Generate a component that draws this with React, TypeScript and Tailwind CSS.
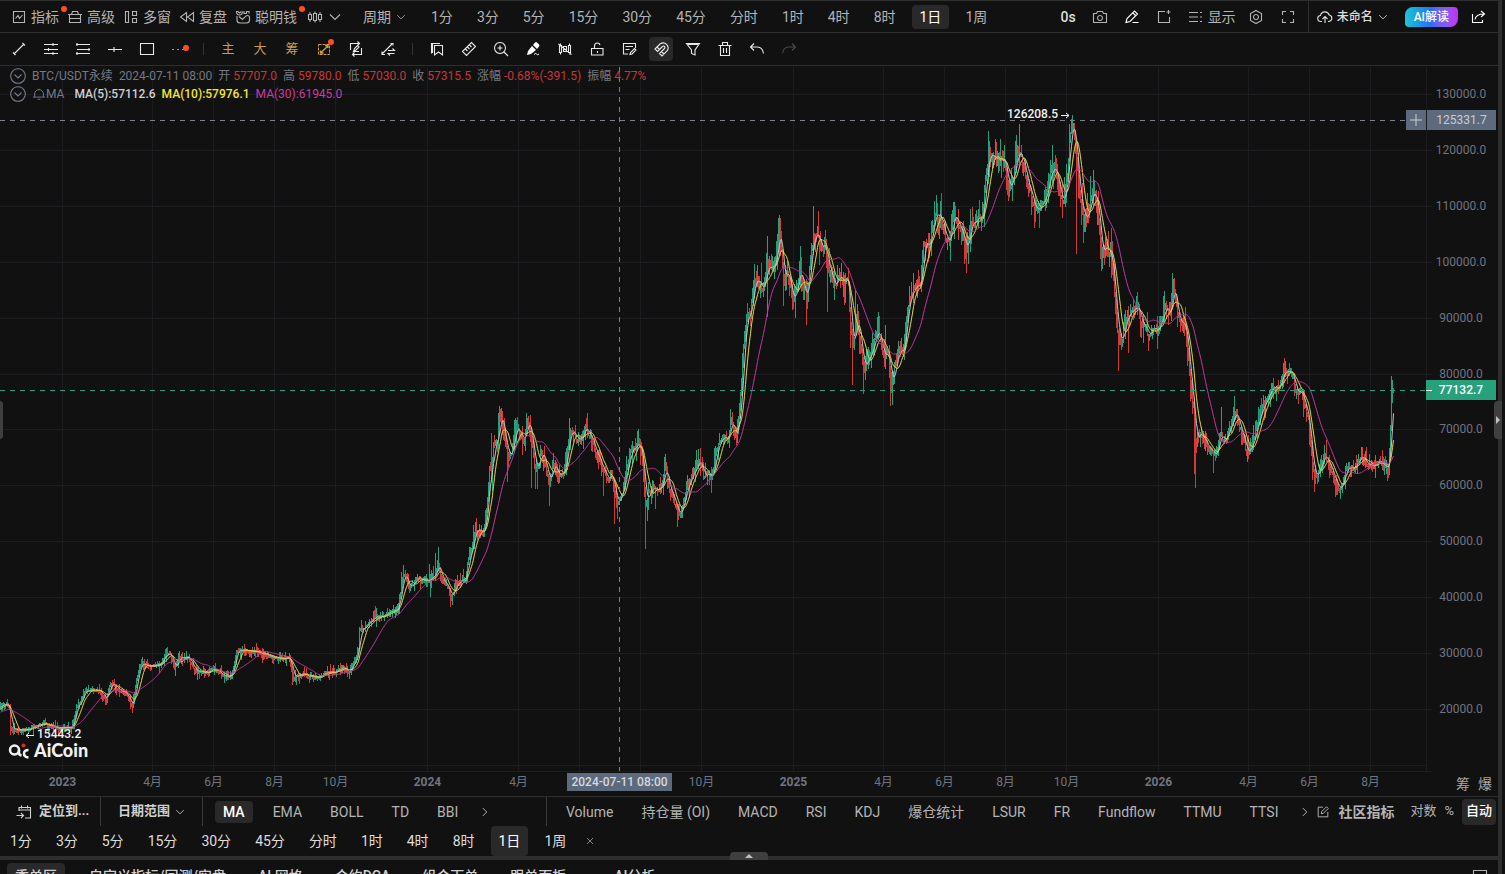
import React, { useState } from "react";
import clsx from "clsx";

// close anchors as [day, y] in plot units, one unit per day on the x axis
const ANCHORS = [
    [-32, 716], [-20, 714], [-10, 712], [0, 706], [6, 703], [9, 708], [10, 726], [14, 730], [22, 730], [30, 729], [34, 726], [45, 723], [48, 726], [60, 728],
    [71, 727], [74, 718], [76, 705], [80, 703], [83, 692], [90, 690], [96, 690], [100, 692], [106, 700], [109, 685], [113, 684], [118, 690],
    [124, 692], [128, 698], [132, 707], [135, 685], [139, 666], [142, 664], [150, 667], [160, 664], [164, 655], [170, 654], [174, 668],
    [179, 657], [188, 658], [194, 670], [200, 672], [208, 673], [212, 668], [218, 672], [224, 676], [229, 677], [233, 668], [236, 651],
    [245, 650], [255, 652], [260, 653], [270, 657], [282, 659], [289, 657], [291, 670], [293, 677], [303, 673], [307, 676], [317, 678],
    [325, 672], [335, 672], [342, 667], [348, 672], [355, 660], [358, 648], [359, 630], [364, 628], [370, 622], [375, 616], [380, 618],
    [387, 613], [397, 610], [400, 592], [402, 577], [405, 576], [409, 588], [413, 584], [417, 577], [421, 579], [428, 582], [431, 576],
    [435, 574], [438, 562], [441, 578], [447, 587], [451, 598], [455, 586], [459, 581], [465, 579], [468, 557], [472, 545], [474, 531],
    [480, 531], [484, 530], [487, 500], [489, 468], [491, 478], [493, 445], [497, 440], [499, 420], [501, 416], [504, 440], [507, 455],
    [511, 452], [515, 428], [520, 432], [523, 443], [527, 422], [530, 430], [534, 464], [538, 466], [541, 450], [545, 465], [549, 482],
    [553, 462], [558, 475], [563, 475], [567, 448], [570, 430], [575, 437], [580, 440], [585, 427], [590, 436], [597, 455], [603, 470],
    [608, 480], [611, 472], [616, 502], [621, 495], [626, 470], [630, 450], [635, 448], [638, 442], [642, 460], [645, 505], [648, 492],
    [652, 487], [657, 491], [661, 485], [665, 465], [669, 490], [675, 505], [679, 516], [684, 497], [690, 477], [695, 467], [699, 458],
    [703, 477], [708, 475], [712, 477], [716, 450], [722, 437], [727, 440], [731, 420], [733, 428], [736, 438], [739, 405], [741, 390],
    [743, 345], [746, 318], [750, 315], [753, 283], [757, 280], [762, 290], [767, 268], [772, 266], [776, 255], [779, 230], [783, 280],
    [787, 275], [793, 300], [798, 282], [800, 265], [803, 293], [807, 295], [811, 245], [814, 235], [817, 234], [820, 250], [824, 242],
    [827, 262], [833, 285], [840, 278], [848, 282], [850, 325], [853, 345], [857, 315], [860, 345], [864, 370], [870, 352], [878, 332],
    [883, 355], [888, 357], [891, 385], [894, 370], [898, 350], [903, 348], [907, 305], [915, 286], [920, 284], [923, 245], [930, 241],
    [935, 212], [940, 215], [945, 238], [950, 242], [953, 213], [960, 228], [966, 249], [970, 226], [975, 222], [983, 213], [985, 175],
    [989, 152], [995, 159], [1004, 160], [1008, 188], [1013, 175], [1018, 150], [1023, 165], [1028, 185], [1035, 210], [1043, 205],
    [1050, 172], [1055, 172], [1058, 185], [1063, 205], [1067, 170], [1070, 132], [1073, 128], [1076, 155], [1078, 182], [1083, 218],
    [1088, 212], [1093, 190], [1097, 205], [1101, 252], [1106, 248], [1110, 252], [1114, 290], [1117, 332], [1121, 342], [1126, 315],
    [1130, 312], [1137, 308], [1143, 327], [1149, 333], [1158, 330], [1164, 308], [1170, 312], [1173, 285], [1178, 320], [1185, 328],
    [1189, 372], [1193, 410], [1195, 443], [1198, 432], [1204, 440], [1210, 450], [1215, 455], [1220, 435], [1225, 440], [1230, 425],
    [1234, 412], [1240, 430], [1246, 452], [1252, 445], [1258, 420], [1265, 400], [1272, 388], [1278, 390], [1283, 372], [1290, 370],
    [1295, 388], [1302, 395], [1308, 420], [1312, 465], [1316, 478], [1324, 455], [1330, 468], [1335, 483], [1340, 490], [1345, 470],
    [1355, 466], [1361, 456], [1367, 464], [1373, 467], [1378, 460], [1388, 468], [1389, 452], [1390, 430], [1391, 405], [1392, 390], [1393, 391],
];

// days with a long wick: [day, high y, low y], 0 keeps the usual range
const WICKS = [
    [10, 0, 734], [12, 0, 732], [23, 0, 734], [45, 718, 0], [132, 0, 712], [167, 647, 0], [292, 0, 684], [256, 643, 0], [361, 620, 0],
    [375, 606, 0], [401, 572, 0], [429, 564, 0], [430, 0, 596], [435, 553, 0], [438, 547, 0], [450, 0, 606], [473, 525, 0], [491, 433, 480], [492, 0, 490],
    [498, 413, 0], [500, 409, 0], [501, 408, 0], [507, 0, 481], [514, 420, 0], [526, 413, 0], [529, 422, 0], [531, 0, 487], [535, 0, 488], [537, 0, 488],
    [549, 0, 505], [569, 418, 0], [575, 425, 0], [586, 418, 0], [603, 0, 495], [614, 0, 523], [617, 0, 518], [638, 429, 0],
    [645, 0, 548], [647, 0, 520], [655, 0, 508], [664, 457, 0], [677, 0, 526], [698, 449, 0], [711, 0, 492], [730, 409, 0],
    [754, 264, 0], [767, 236, 316], [778, 218, 0], [779, 215, 0], [783, 0, 305], [792, 0, 309], [800, 246, 0], [806, 0, 324],
    [813, 206, 0], [827, 0, 311], [852, 0, 384], [855, 290, 0], [863, 0, 393], [885, 325, 0], [890, 0, 405], [892, 0, 404],
    [936, 195, 0], [954, 202, 0], [950, 0, 260], [966, 0, 272], [988, 131, 0], [1016, 135, 0], [1019, 124, 0], [1035, 0, 221],
    [1071, 119, 0], [1072, 115, 0], [1076, 0, 253], [1083, 0, 242], [1093, 170, 0], [1102, 0, 268], [1118, 0, 370], [1128, 0, 352],
    [1137, 292, 0], [1164, 291, 0], [1172, 273, 0], [1194, 0, 473], [1195, 0, 487], [1213, 0, 472], [1221, 407, 0], [1234, 396, 0],
    [1284, 358, 0], [1314, 0, 491], [1324, 445, 0], [1335, 0, 496], [1340, 0, 498], [1361, 447, 0], [1391, 376, 0], [1392, 380, 402], [1393, 388, 392],
];

const MONTHS: Array<[number, string]> = [
    [62, "2023"], [152, "4月"], [213, "6月"], [274, "8月"], [335, "10月"], [427, "2024"], [518, "4月"], [579, ""], [640, ""], [701, "10月"],
    [793, "2025"], [883, "4月"], [944, "6月"], [1005, "8月"], [1066, "10月"], [1158, "2026"], [1248, "4月"], [1309, "6月"], [1370, "8月"],
];

const PRICES = ["130000.0", "120000.0", "110000.0", "100000.0", "90000.0", "80000.0", "70000.0", "60000.0", "50000.0", "40000.0", "30000.0", "20000.0"];
const PERIODS = ["1分", "3分", "5分", "15分", "30分", "45分", "分时", "1时", "4时", "8时", "1日", "1周"];
const MAIN_INDICATORS = ["MA", "EMA", "BOLL", "TD", "BBI"];
const SUB_INDICATORS = ["Volume", "持仓量 (OI)", "MACD", "RSI", "KDJ", "爆仓统计", "LSUR", "FR", "Fundflow", "TTMU", "TTSI"];
const PANELS = ["委单区", "自定义指标/回测/实盘", "AI 网格", "合约DCA", "组合下单", "跟单面板", "AI分析"];

const buildSeries = () => {
    let seed = 20240711;
    const rand = () => {
        seed = (seed * 1103515245 + 12345) % 2147483648;
        return seed / 2147483648;
    };
    const closes: number[] = [];
    const first = ANCHORS[0][0];
    let k = 0;
    for (let x = first; x <= 1393; x++) {
        while (k < ANCHORS.length - 2 && x >= ANCHORS[k + 1][0]) k++;
        const [x0, y0] = ANCHORS[k];
        const [x1, y1] = ANCHORS[k + 1];
        const base = y0 + ((y1 - y0) * (x - x0)) / (x1 - x0);
        const amp = 2 + Math.max(0, 690 - base) / 60;
        closes.push(base + (rand() - 0.5) * amp);
    }
    let up = "";
    let down = "";
    for (let x = 0; x <= 1393; x++) {
        const i = x - first;
        const open = closes[i - 1];
        const close = closes[i];
        const amp = 5 + Math.max(0, 690 - close) / 40;
        let high = Math.min(open, close) - rand() * rand() * amp * 1.5;
        let low = Math.max(open, close) + rand() * rand() * amp * 1.5;
        const wick = WICKS.find((w) => w[0] == x);
        if (wick) {
            high = wick[1] || high;
            low = wick[2] || low;
        }
        // the extremes of the range stay at the labelled high and low
        const seg = `M${x + 0.5} ${Math.max(115, Math.round(high))}V${Math.min(735, Math.round(low) + 1)}`;
        if (close <= open) up += seg;
        else down += seg;
    }
    const average = (n: number) => {
        const points = [];
        for (let x = 0; x <= 1393; x++) {
            let sum = 0;
            const i = x - first;
            for (let j = 0; j < n; j++) sum += closes[i - j];
            points.push(`${x + 0.5},${(sum / n).toFixed(1)}`);
        }
        return points.join(" ");
    };
    return { up, down, ma5: average(5), ma10: average(10), ma30: average(30) };
};

const series = buildSeries();

const ICONS = {
    indicator: "M2.5 2.5h11v11h-11z M4.5 9.5l2.5-3 1.5 3 3-3.5",
    briefcase: "M4.5 5.5l1-3h5l1 3 M1 5.5h14 M2.5 5.5v8h11v-8 M2.5 9.5h11",
    windows: "M2.5 2.5h3v11h-3z M9.5 2.5h4v4h-4z M9.5 9.5h4v4h-4z",
    rewind: "M7.5 3.5v9l-6-4.5z M14.5 3.5v9L8.5 8z",
    whale: "M1 2.500h2l1.500 1.500L6.500 2.500M1.500 2.500q0 3.500 3 3.500 3 0 3-3.500 M2 7v4q0 3 3 3h6.500q3 0 3-3V8.500q0-2-2-2-1.500 0-3 2L7.500 10.500 4 7.500 M9 2v2.500h2.500V2.500h2.500v2",
    candles: "M1.500 5.500h3v5h-3z M3 3v2.500 M3 10.500v2.500 M6.500 4.500h3v7h-3z M8 2.500v2 M8 11.500v2 M11.500 5.500h3v5h-3z M13 3v2.500 M13 10.500v2.500",
    chevron: "M3 5.500l5 5 5-5",
    right: "M5.500 3.500L10 8l-4.500 4.500",
    trend: "M3.500 12.500l9-9 M2 11.500l2.500 2.500 M11.500 2l2.500 2.500",
    hlines: "M1 3.500h14 M1 8.500h14 M1 12.500h14 M10 2v3 M5.500 7v3 M10 11v3",
    channel: "M1 3.500h14 M2 8.500h13 M1 12.500h14 M2 2v3 M14 7v3 M2 11v3",
    cross: "M1 8.500h14 M7 6v5",
    rect: "M1.500 2.500h13v11h-13z",
    dots: "M1 8.500h2 M6 8.500h2 M11 8.500h2",
    swap: "M2.500 9v-6.500h9 M9.500 .5l2 2-2 2 M13.500 7v6.500h-9 M6.500 11.500l-2 2 2 2 M5.500 10.500l1-3 3-3 1.500 1.500-3 3z M5.500 10.500h5.500",
    slope: "M2 13L12 3 M2 10.500v3h3 M10.500 2.500h2.500v2 M8 9.500h6.500l-2-2 M14.500 12.500H8l2 2",
    bookmark: "M2.500 12.500v-10h8.500 M3.500 12v-9 M5.500 4.500h8v9.500l-4-3-4 3z",
    ruler: "M1.500 10.500L10.500 1.500l4 4L5.500 14.500z M4.500 8l2 2 M6.500 6l2 2 M8.500 4l2 2",
    zoom: "M7 1.500a5.500 5.500 0 1 0 0.010 0z M11 11l4 4 M4.500 7h5 M7 4.500v5",
    hideCandles: "M2.500 4.500h2v7h-2z M6.500 5.500h3v5h-3z M11.500 4.500h2v7h-2z M3.500 2.500v2 M3.500 11.500v2 M12.500 2.500v2 M12.500 11.500v2 M1.500 3l13 10.500",
    unlock: "M2.500 7.500h11.500v6.500H2.500z M5.500 7.500V5q0-3 3-3 2 0 2.500 2 M8.500 10v2",
    note: "M14.500 7V2.500H2.500v10.500h4.500 M4.500 5.500h7.500 M4.500 8.500h4 M9 13.500l.5-2 4-4 1.500 1.500-4 4z",
    magnet: "M2 8L7 3a5 5 0 0 1 7 7l-5 5-2.500-2.500 5-5a1.400 1.400 0 0 0-2-2l-5 5z M4 6l2.500 2.500 M11 13 L8.500 10.500",
    filter: "M1.500 2.500h13L10 9v5l-3.500-1.500V9z M3 3.500h10",
    trash: "M1.500 4.500h13 M5.500 4V1.500h5V4 M3.500 4.500v10h9v-10 M6.500 7v5 M9.500 7v5",
    undo: "M5 2.500L1.500 6 5 9.500 M1.500 6h7q5 0 6 6.500",
    redo: "M11 2.500L14.500 6 11 9.500 M14.500 6h-7q-5 0-6 6.500",
    camera: "M1.500 4.500h3l1-2h5l1 2h3v9h-13z M8 6.500a2.500 2.500 0 1 0 .010 0z",
    pen: "M2 13.500l1-4L10.500 2l3 3L6 12.500z M8.500 13.500h6 M9 4l3 3",
    addWindow: "M9 2.500H2.500v11h11V8 M12.500 1v4 M10.500 3h4",
    list: "M1 3.500h9 M1 8h9 M1 12.500h9 M12 3.500h2 M12 8h2 M12 12.500h2",
    hex: "M8 1.500l5.500 3v7L8 14.500l-5.500-3v-7z M8 5.500a2.500 2.500 0 1 0 .010 0z",
    expand: "M2.500 6V2.500H6 M10 2.500h3.500V6 M13.500 10v3.500H10 M6 13.500H2.500V10",
    cloud: "M5 12.500H4a3 3 0 0 1-.5-6 4.500 4.500 0 0 1 8.700-.5A3.300 3.300 0 0 1 12 12.500h-1 M8 14V8 M5.500 10L8 7.500l2.500 2.500",
    share: "M2.500 5v8.500h10V11 M5 10.500q1-5.500 9-5.500 M11 2l3.500 3L11 8",
    locate: "M3 7V3.500h11.500v10.500H9 M3 6h11.500 M5.500 1.500v3 M11.500 1.500v3 M0.500 11.500h7 M5 9l2.500 2.500L5 14",
    edit: "M8 2.500H2.500v11h11V8 M6 10l.5-2.500L12 2l2 2-5.500 5.500z",
    bell: "M3 11.500V8a5 5 0 0 1 10 0v3.500 M1 11.500h14 M6.500 14h3 M8 2v1",
    collapse: "M8 .75a7.250 7.250 0 1 0 .010 0z M4.500 6.500L8 10l3.500-3.500",
    close: "M4 4l8 8 M12 4l-8 8",
};

type IconName = keyof typeof ICONS;

const Icon = ({ name, className = "size-4" }: { name: IconName; className?: string }) => (
    <svg viewBox="0 0 16 16" className={clsx("shrink-0", className)} fill="none" stroke="currentColor" strokeWidth="1.1" aria-hidden="true">
        <path d={ICONS[name]} />
    </svg>
);

const Dot = () => <span className="absolute size-1.5 rounded-full bg-[#ff4d26] -top-px -right-2" />;

const MENU: Array<{ icon: IconName; label: string; dot?: boolean }> = [
    { icon: "indicator", label: "指标", dot: true },
    { icon: "briefcase", label: "高级" },
    { icon: "windows", label: "多窗" },
    { icon: "rewind", label: "复盘" },
    { icon: "whale", label: "聪明钱", dot: true },
];

const PeriodTabs = ({ value, onChange }: { value: string; onChange: (v: string) => void }) => (
    <div className="flex items-center gap-2 shrink-0">
        {PERIODS.map((p) => (
            <button
                key={p}
                onClick={() => onChange(p)}
                className={clsx("px-2 rounded whitespace-nowrap", p == value ? "bg-[#292929] text-white h-full" : "")}
            >
                {p}
            </button>
        ))}
    </div>
);

const TopBar = ({ period, setPeriod }: { period: string; setPeriod: (v: string) => void }) => (
    <header className="flex items-center h-[33px] shrink-0 border-y border-[#2e2e2e] text-sm text-[#b4b4b4]">
        <div className="flex items-center gap-2 pl-[11px] shrink-0">
            {MENU.map((m) => (
                <button key={m.label} className="relative flex items-center gap-1 whitespace-nowrap">
                    <Icon name={m.icon} />
                    {m.label}
                    {m.dot && <Dot />}
                </button>
            ))}
            <button aria-label="K线样式" className="flex items-center gap-1 pl-0.5">
                <Icon name="candles" />
                <Icon name="chevron" />
            </button>
        </div>
        <button className="flex items-center gap-1 pl-5 pr-4 shrink-0">
            周期
            <Icon name="chevron" className="size-3" />
        </button>
        <div className="flex items-stretch h-6 leading-6">
            <PeriodTabs value={period} onChange={setPeriod} />
        </div>
        <div className="flex items-center h-full ml-auto shrink-0">
            <div className="flex items-center gap-4 pr-3">
                <span className="text-[#dedede] font-medium">0s</span>
                <button aria-label="截图"><Icon name="camera" /></button>
                <button aria-label="画线" className="text-white"><Icon name="pen" /></button>
                <button aria-label="新窗口"><Icon name="addWindow" /></button>
                <button className="flex items-center gap-1 -mr-1"><Icon name="list" />显示</button>
                <button aria-label="设置"><Icon name="hex" /></button>
                <button aria-label="全屏"><Icon name="expand" /></button>
            </div>
            <div className="flex items-center h-full pl-2 pr-3 border-l border-[#2e2e2e]">
                <button className="flex items-center gap-1 text-xs font-medium text-[#dedede]">
                    <Icon name="cloud" />
                    未命名
                    <Icon name="chevron" className="size-3" />
                </button>
                <button className="h-5 px-[9px] ml-4 mr-3 text-xs font-medium text-white rounded-tl-lg rounded-br-lg rounded-tr-sm rounded-bl-sm bg-linear-to-r from-[#22c5d0] via-[#2b6cf5] to-[#c02ff5]">AI解读</button>
                <button aria-label="分享" className="text-white"><Icon name="share" /></button>
            </div>
        </div>
    </header>
);

const Tool = ({ name, label, active, dim }: { name: IconName; label: string; active?: boolean; dim?: boolean }) => (
    <button
        aria-label={label}
        className={clsx("flex items-center justify-center size-6 rounded shrink-0", active && "bg-[#292929]", dim ? "text-[#4a4a4a]" : "text-[#e8e8e8]")}
    >
        <Icon name={name} />
    </button>
);

const Separator = () => <span className="w-px h-3 mx-1 bg-[#333333] shrink-0" />;

const DrawBar = () => (
    <div className="flex items-center gap-2 h-[33px] pl-[7px] shrink-0 border-b border-[#2e2e2e]">
        <Tool name="trend" label="线段" />
        <Tool name="hlines" label="水平线" />
        <Tool name="channel" label="通道" />
        <Tool name="cross" label="十字线" />
        <Tool name="rect" label="矩形" />
        <button aria-label="更多" className="relative flex items-center justify-center size-6 text-[#999999]">
            <Icon name="dots" />
            <span className="absolute right-0.5 top-2 size-1.5 rounded-full bg-[#ff4d26]" />
        </button>
        <Separator />
        {["主", "大", "筹"].map((t) => (
            <button key={t} className="size-6 text-[13px] text-[#c79d4c]">{t}</button>
        ))}
        <button aria-label="智能画线" className="relative flex items-center justify-center size-6 text-[#c79d4c]">
            <svg viewBox="0 0 16 16" className="size-4" fill="none" stroke="currentColor" aria-hidden="true">
                <path d="M2.500 3.500h11v10h-11z" strokeDasharray="3 1" />
                <path d="M5 11.500l6.500-6 M4.500 9.500v2.500h3 M9 4.500h3v2.500" strokeWidth="1.400" />
            </svg>
            <span className="absolute right-0.5 top-0.5 size-1.5 rounded-full bg-[#ff4d26]" />
        </button>
        <Tool name="swap" label="同步" />
        <Tool name="slope" label="斜率" />
        <Separator />
        <Tool name="bookmark" label="收藏" />
        <Tool name="ruler" label="测量" />
        <Tool name="zoom" label="放大" />
        <button aria-label="画笔" className="flex items-center justify-center size-6 text-white">
            <svg viewBox="0 0 16 16" className="size-4" fill="currentColor" aria-hidden="true">
                <path d="M2 14l1-4 4-5 4 4-5 4z M8 4l2-2.500q1-1 2 0l2 2q1 1 0 2L12 8z" />
                <path d="M9 13.500q1.500-2 2.500-.5t2.500 0" fill="none" stroke="currentColor" />
            </svg>
        </button>
        <Tool name="hideCandles" label="隐藏K线" />
        <Tool name="unlock" label="锁定" />
        <Tool name="note" label="笔记" />
        <Tool name="magnet" label="磁吸" active />
        <Tool name="filter" label="筛选" />
        <Tool name="trash" label="删除" />
        <Tool name="undo" label="撤销" />
        <Tool name="redo" label="重做" dim />
    </div>
);

const Quote = ({ label, value }: { label: string; value: string }) => (
    <span>
        {label} <span className="text-[#c93636]">{value}</span>
    </span>
);

const Legend = () => (
    <div className="absolute top-px left-2.5 text-xs leading-[18px] text-[#747986] whitespace-nowrap">
        <div className="flex items-center gap-1.5">
            <button aria-label="收起"><Icon name="collapse" className="block size-4" /></button>
            <span>BTC/USDT永续</span>
            <span>2024-07-11 08:00</span>
            <Quote label="开" value="57707.0" />
            <Quote label="高" value="59780.0" />
            <Quote label="低" value="57030.0" />
            <Quote label="收" value="57315.5" />
            <Quote label="涨幅" value="-0.68%(-391.5)" />
            <Quote label="振幅" value="4.77%" />
        </div>
        <div className="flex items-center gap-1.5">
            <button aria-label="收起指标"><Icon name="collapse" className="block size-4" /></button>
            <span className="flex items-center pr-1"><Icon name="bell" className="size-3.5" />MA</span>
            <span className="font-medium text-[#d0d0d0]">MA(5):57112.6</span>
            <span className="font-medium text-[#f3e62c]">MA(10):57976.1</span>
            <span className="text-[#c93aa2]">MA(30):61945.0</span>
        </div>
    </div>
);

const Plot = () => (
    <svg viewBox="0 66 1432 730" className="block shrink-0 w-[1432px] h-[730px]" role="img" aria-label="BTC/USDT K线图">
        <g stroke="#1d1d21" shapeRendering="crispEdges">
            {PRICES.map((p, i) => (
                <line key={p} x1="0" x2="1432" y1={Math.round(94 + i * 55.9) + 0.5} y2={Math.round(94 + i * 55.9) + 0.5} />
            ))}
            {MONTHS.map(([x]) => (
                <line key={x} x1={x + 0.5} x2={x + 0.5} y1="67" y2="771" />
            ))}
            <path d="M0 765.500h1427 M1426.500 67v704 M0 771.500h1432" />
        </g>
        <g fill="none" shapeRendering="crispEdges">
            <path d={series.up} stroke="#26a17c" />
            <path d={series.down} stroke="#d03c3c" />
        </g>
        <g fill="none" strokeLinejoin="round">
            <polyline points={series.ma5} stroke="#c8c8c8" />
            <polyline points={series.ma10} stroke="#e8dc2e" />
            <polyline points={series.ma30} stroke="#c038a0" />
        </g>
        <g shapeRendering="crispEdges">
            <path d="M0 120.500h1406 M619.500 67v704" stroke="#7d818c" strokeDasharray="5 5" />
            <path d="M0 390.500h1426" stroke="#26a17c" strokeDasharray="5 5" />
        </g>
        <g className="text-xs font-medium" fill="#f2f2f2">
            <text x="1007" y="118">126208.5</text>
            <text x="37" y="738">15443.2</text>
        </g>
        <path d="M1061 115.500h8 M1066 113l3 2.500-3 2.500 M34 735.500h-8 M29 733l-3 2.500 3 2.500" fill="none" stroke="#f2f2f2" />
        <g fill="none" stroke="#f2f2f2" strokeWidth="2.500">
            <circle cx="14.500" cy="750" r="4.500" />
            <path d="M19 750v3q0 2 2.500 2.500" />
            <path d="M28.500 750q-4.500 0-4.500 3.500t4.500 4" />
            <circle cx="23.500" cy="745.500" r="2" fill="#c8351c" stroke="none" />
        </g>
        <text x="34" y="757" className="font-[Lato] font-black text-lg" fill="#f2f2f2">AiCoin</text>
        <g className="text-xs" fill="#6f7482" textAnchor="middle">
            {MONTHS.map(([x, label]) => (
                <text key={x} x={x + 0.5} y="786" className={clsx(label.length == 4 && "font-bold")}>{label}</text>
            ))}
        </g>
        <rect x="567" y="773" width="105" height="18" fill="#5d6a7e" />
        <text x="619.5" y="786" className="text-xs font-medium" textAnchor="middle" fill="#d5d8dd">2024-07-11 08:00</text>
    </svg>
);

const Chart = () => (
    <section className="relative flex shrink-0 border-b border-[#2e2e2e] font-[Roboto,'Noto_Sans_CJK_SC',sans-serif]">
        <div className="flex justify-end flex-1 min-w-0 overflow-hidden">
            <Plot />
        </div>
        <div className="flex flex-col w-[66px] shrink-0 text-xs text-[#6f7482]">
            <div className="flex flex-col justify-between h-[631px] mt-5 pr-2 leading-4 text-center">
                {PRICES.map((p) => <span key={p}>{p}</span>)}
            </div>
            <div className="flex justify-end gap-2 mt-auto mb-0.5 pr-1.5 text-sm text-[#a8a8a8]">
                <button>筹</button>
                <button>爆</button>
            </div>
        </div>
        <Legend />
        <div className="absolute right-0.5 top-11 flex h-5 gap-px text-xs leading-5 text-[#c9ccd2]">
            <button aria-label="添加提醒" className="flex items-center justify-center w-5 bg-[#5d6a7e]">
                <svg viewBox="0 0 12 12" className="size-3" stroke="currentColor" aria-hidden="true"><path d="M6 0v12 M0 6h12" /></svg>
            </button>
            <span className="w-[69px] text-center bg-[#5d6a7e]">125331.7</span>
        </div>
        <div className="absolute right-0.5 top-[314px] flex items-center h-5 w-[70px] text-xs font-medium text-white bg-[#26a17c]">
            <span className="w-1.5 h-px bg-white" />
            <span className="flex-1 pr-1.5 text-center">77132.7</span>
        </div>
    </section>
);

const IndicatorBar = () => {
    const [main, setMain] = useState("MA");

    return (
        <div className="flex items-center h-[29px] shrink-0 text-sm text-[#b4b4b4] whitespace-nowrap">
            <button className="flex items-center gap-[7px] w-[101px] h-full pl-4 shrink-0 text-[13px] font-bold text-[#d0d0d0] border-r border-[#3a3a3a]">
                <Icon name="locate" />定位到...
            </button>
            <button className="flex items-center gap-1 w-[102px] h-full pl-[17px] shrink-0 text-[13px] font-bold text-[#d0d0d0] border-r border-[#3a3a3a]">
                日期范围<Icon name="chevron" className="size-3" />
            </button>
            <div className="flex items-center gap-3 w-[344px] h-full pl-3 shrink-0 border-r border-[#3a3a3a]">
                {MAIN_INDICATORS.map((name) => (
                    <button
                        key={name}
                        onClick={() => setMain(name)}
                        className={clsx("h-[22px] px-2 rounded", name == main && "bg-[#292929] text-white font-medium")}
                    >
                        {name}
                    </button>
                ))}
                <button aria-label="更多主图指标"><Icon name="right" className="size-3.5" /></button>
            </div>
            <div className="flex items-center flex-1 gap-3 pl-[11px] min-w-0 overflow-hidden">
                {SUB_INDICATORS.map((name) => <button key={name} className="px-2">{name}</button>)}
            </div>
            <div className="flex items-center pr-0.5 shrink-0 text-[13px]">
                <button aria-label="更多副图指标"><Icon name="right" className="size-3.5" /></button>
                <button className="flex items-center gap-2 ml-1 mr-4 text-sm font-bold"><Icon name="edit" className="size-3.5" />社区指标</button>
                <button>对数</button>
                <button className="px-2">%</button>
                <button className="h-[26px] px-1 text-white rounded bg-[#292929] font-medium">自动</button>
            </div>
        </div>
    );
};

export default function App() {

    const [period, setPeriod] = useState("1日");

    return (
        <main className="flex h-screen overflow-hidden bg-[#111111] font-[Roboto,'Noto_Sans_CJK_SC',sans-serif]">
            <div className="relative flex flex-col flex-1 min-w-0">
                <TopBar period={period} setPeriod={setPeriod} />
                <DrawBar />
                <Chart />
                <IndicatorBar />
                <div className="flex items-stretch h-[30px] pl-0.5 shrink-0 text-sm text-[#dedede]">
                    <PeriodTabs value={period} onChange={setPeriod} />
                    <button aria-label="关闭" className="pl-2.5 text-[#999999]"><Icon name="close" className="size-3" /></button>
                </div>
                <div className="relative h-1 shrink-0 bg-[#2e2e2e]">
                    <button aria-label="展开面板" className="absolute bottom-0 left-[730px] flex justify-center items-center w-[38px] h-2 rounded-t bg-[#3f3f3f]">
                        <svg viewBox="0 0 8 4" className="w-2 h-1" fill="#c0c0c0" aria-hidden="true"><path d="M0 4l4-4 4 4z" /></svg>
                    </button>
                </div>
                <nav className="flex gap-4 pt-[3px] pl-[7px] shrink-0 text-sm font-medium text-[#d0d0d0]">
                    {PANELS.map((p, i) => (
                        <button
                            key={p}
                            className={clsx("h-[26px] px-2 rounded whitespace-nowrap", i == 0 && "bg-[#292929]", i == PANELS.length - 1 && "ml-4")}
                        >
                            {p}
                        </button>
                    ))}
                    <button aria-label="窗口" className="ml-auto mr-2.5 text-[#b4b4b4]"><Icon name="rect" /></button>
                </nav>
                <button aria-label="展开左栏" className="absolute left-0 top-[401px] w-[3px] h-[38px] rounded-r bg-[#3f3f3f]" />
            </div>
            <div className="relative w-[7px] shrink-0 border-l-4 border-[#2e2e2e]">
                <button aria-label="展开右栏" className="absolute -left-2 top-[401px] flex items-center justify-center w-2 h-[38px] rounded-l bg-[#3f3f3f]">
                    <svg viewBox="0 0 4 8" className="w-1 h-2" fill="#c0c0c0" aria-hidden="true"><path d="M0 0l4 4-4 4z" /></svg>
                </button>
            </div>
        </main>
    );
}
